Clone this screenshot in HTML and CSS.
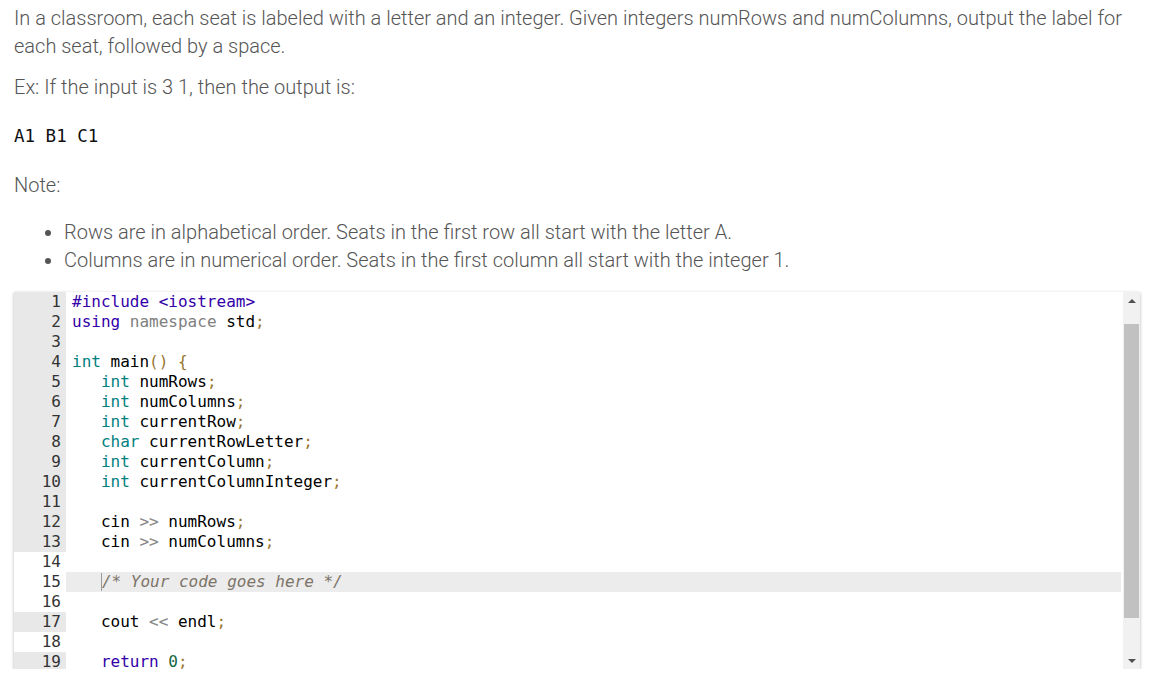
FILE: index.html
```html
<!DOCTYPE html>
<html lang="en">
  <head>
    <meta charset="UTF-8" />
    <title>Classroom seats</title>
    <link rel="stylesheet" href="styles.css">
  </head>
  <body>
    <div class="prompt">
      <p class="text">In a classroom, each seat is labeled with a letter and an integer. Given integers numRows and numColumns, output the label for each seat, followed by a space.</p>
      <p class="text ex">Ex: If the input is 3 1, then the output is:</p>
      <pre class="sample">A1 B1 C1 </pre>
      <p class="text note">Note:</p>
      <ul class="notes">
        <li>Rows are in alphabetical order. Seats in the first row all start with the letter A.</li>
        <li>Columns are in numerical order. Seats in the first column all start with the integer 1.</li>
      </ul>
    </div>

    <div class="editor">
      <div class="lines">
        <div class="line locked"><span class="num">1</span><span class="code"><span class="kw">#include &lt;iostream&gt;</span></span></div>
        <div class="line locked"><span class="num">2</span><span class="code"><span class="kw">using</span> <span class="def">namespace</span> std<span class="br">;</span></span></div>
        <div class="line locked"><span class="num">3</span><span class="code"></span></div>
        <div class="line locked"><span class="num">4</span><span class="code"><span class="ty">int</span> main<span class="br">() {</span></span></div>
        <div class="line locked"><span class="num">5</span><span class="code">   <span class="ty">int</span> numRows<span class="br">;</span></span></div>
        <div class="line locked"><span class="num">6</span><span class="code">   <span class="ty">int</span> numColumns<span class="br">;</span></span></div>
        <div class="line locked"><span class="num">7</span><span class="code">   <span class="ty">int</span> currentRow<span class="br">;</span></span></div>
        <div class="line locked"><span class="num">8</span><span class="code">   <span class="ty">char</span> currentRowLetter<span class="br">;</span></span></div>
        <div class="line locked"><span class="num">9</span><span class="code">   <span class="ty">int</span> currentColumn<span class="br">;</span></span></div>
        <div class="line locked"><span class="num">10</span><span class="code">   <span class="ty">int</span> currentColumnInteger<span class="br">;</span></span></div>
        <div class="line locked"><span class="num">11</span><span class="code"></span></div>
        <div class="line locked"><span class="num">12</span><span class="code">   cin <span class="op">&gt;&gt;</span> numRows<span class="br">;</span></span></div>
        <div class="line locked"><span class="num">13</span><span class="code">   cin <span class="op">&gt;&gt;</span> numColumns<span class="br">;</span></span></div>
        <div class="line"><span class="num">14</span><span class="code"></span></div>
        <div class="line active"><span class="num">15</span><span class="code">   <span class="cursor"></span><span class="cm">/* Your code goes here */</span></span></div>
        <div class="line"><span class="num">16</span><span class="code"></span></div>
        <div class="line locked"><span class="num">17</span><span class="code">   cout <span class="op">&lt;&lt;</span> endl<span class="br">;</span></span></div>
        <div class="line"><span class="num">18</span><span class="code"></span></div>
        <div class="line locked"><span class="num">19</span><span class="code">   <span class="kw">return</span> <span class="nb">0</span><span class="br">;</span></span></div>
        <div class="line locked"><span class="num">20</span><span class="code"><span class="br">}</span></span></div>
      </div>
      <div class="scrollbar">
        <div class="arrow up"></div>
        <div class="track"><div class="thumb"></div></div>
        <div class="arrow down"></div>
      </div>
    </div>
  </body>
</html>
```

FILE: styles.css
```css
* {
  box-sizing: border-box;
}
body {
  margin: 0;
  background: #fff;
  font-family: Roboto, "Liberation Sans", sans-serif;
  font-weight: 300;
  color: #555;
}
.prompt {
  padding: 4px 14px 0 14px;
}
.text {
  margin: 0;
  font-size: 20px;
  line-height: 28px;
}
.ex {
  margin-top: 13px;
}
.sample {
  margin: 25px 0 0 0;
  font-family: "DejaVu Sans Mono", monospace;
  font-size: 17.5px;
  line-height: 20px;
  color: #111;
}
.note {
  margin-top: 25px;
}
.notes {
  margin: 19px 0 0 0;
  padding-left: 50px;
  font-size: 20px;
  line-height: 28px;
}
.editor {
  display: flex;
  height: 377px;
  margin: 18px 12px 0 14px;
  overflow: hidden;
  background: #fff;
  box-shadow: 0 1px 3px rgba(0, 0, 0, 0.3);
  font-family: "DejaVu Sans Mono", monospace;
  font-size: 16px;
  font-weight: normal;
  color: #000;
}
.lines {
  flex: 1;
}
.line {
  display: flex;
  height: 20px;
  line-height: 20px;
}
.num {
  width: 52px;
  padding-right: 5px;
  text-align: right;
  color: #333;
}
.locked .num {
  background: #e8e8e8;
}
.code {
  flex: 1;
  padding-left: 6px;
  white-space: pre;
}
.active .code {
  background: #ececec;
}
.cursor {
  display: inline-block;
  width: 0;
  height: 18px;
  border-left: 1px solid #999;
  vertical-align: -4px;
}
.kw {
  color: #3300aa;
}
.def {
  color: #808080;
}
.ty {
  color: #008080;
}
.br {
  color: #997733;
}
.op {
  color: #888;
}
.cm {
  color: #7c7468;
  font-style: italic;
}
.nb {
  color: #116644;
}
.scrollbar {
  width: 19px;
  display: flex;
  flex-direction: column;
  background: #f1f1f1;
  border-left: 2px solid #fff;
}
.arrow {
  height: 17px;
  display: flex;
  align-items: center;
  justify-content: center;
}
.arrow.up::before {
  content: "";
  border-left: 4px solid transparent;
  border-right: 4px solid transparent;
  border-bottom: 4px solid #505050;
}
.arrow.down::before {
  content: "";
  border-left: 4px solid transparent;
  border-right: 4px solid transparent;
  border-top: 4px solid #505050;
}
.track {
  flex: 1;
  padding: 15px 1px 0 1px;
}
.thumb {
  height: 294px;
  background: #c1c1c1;
}
```
